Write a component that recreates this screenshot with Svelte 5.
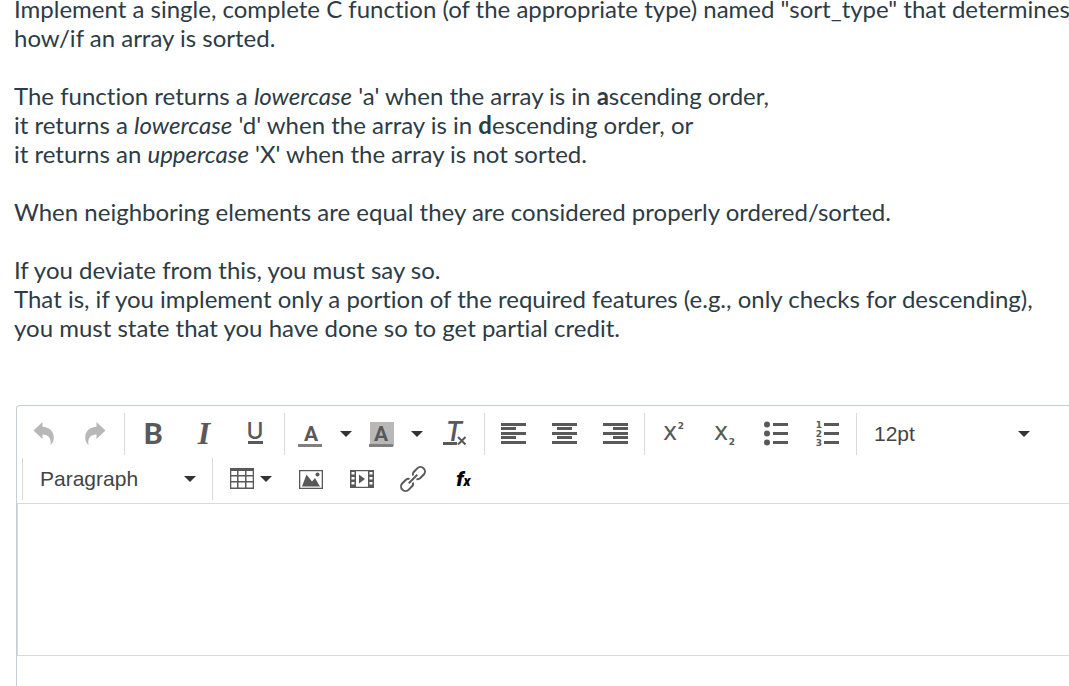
<script lang="ts">
  const fontSizes = ['8pt', '10pt', '12pt', '14pt', '18pt', '24pt', '36pt'];
  const blocks = ['Paragraph', 'Heading 2', 'Heading 3', 'Heading 4', 'Preformatted'];

  let fontSize = $state('12pt');
  let block = $state('Paragraph');
  let answer = $state('');
</script>

{#snippet caret()}
  <svg class="caret" width="12" height="6" viewBox="0 0 12 6"><path d="M0 0h12L6 6z" /></svg>
{/snippet}

{#snippet align(x: number)}
  <svg width="25" height="24" viewBox="0 0 25 24">
    <path d="M0 1h25v3H0zM0 10h25v3H0zM0 19h25v3H0z" />
    <path d="M{x} 5h15v3h-15zM{x} 14h15v3h-15z" />
  </svg>
{/snippet}

<main>
  <section class="question">
    <p>
      Implement a single, complete C function (of the appropriate type) named "sort_type" that determines<br />
      how/if an array is sorted.
    </p>
    <p>
      The function returns a <em>lowercase</em> 'a' when the array is in <strong>a</strong>scending order,<br />
      it returns a <em>lowercase</em> 'd' when the array is in <strong>d</strong>escending order, or<br />
      it returns an <em>uppercase</em> 'X' when the array is not sorted.
    </p>
    <p>When neighboring elements are equal they are considered properly ordered/sorted.</p>
    <p>
      If you deviate from this, you must say so.<br />
      That is, if you implement only a portion of the required features (e.g., only checks for descending),<br />
      you must state that you have done so to get partial credit.
    </p>
  </section>

  <section class="editor">
    <div class="toolbar" role="toolbar" aria-label="Editor">
      <div class="row">
        <div class="group">
          <button class="disabled" aria-label="Undo">
            <svg width="25" height="24" viewBox="0 0 25 24">
              <path d="M1.5 8.5 10.5 0v4.7C17 5 21.8 9 21.8 15.5c0 3-1 5.5-3.3 7.5C19.5 16 16.5 12.7 10.5 12.5V17z" />
            </svg>
          </button>
          <button class="disabled" aria-label="Redo">
            <svg width="25" height="24" viewBox="0 0 25 24">
              <path d="M22.5 8.5 13.5 0v4.7C7 5 2.2 9 2.2 15.5c0 3 1 5.5 3.3 7.5C4.5 16 7.5 12.7 13.5 12.5V17z" />
            </svg>
          </button>
        </div>
        <div class="group">
          <button aria-label="Bold">
            <svg width="25" height="24" viewBox="0 0 25 24">
              <text class="bold" x="12" y="22">B</text>
            </svg>
          </button>
          <button aria-label="Italic">
            <svg width="25" height="24" viewBox="0 0 25 24">
              <text class="italic" x="12" y="22">I</text>
            </svg>
          </button>
          <button aria-label="Underline">
            <svg width="25" height="24" viewBox="0 0 25 24">
              <text class="under" x="12" y="17">U</text>
              <path d="M5 19h15v3H5z" />
            </svg>
          </button>
        </div>
        <div class="group">
          <button class="main" aria-label="Text color">
            <svg width="24" height="25" viewBox="0 0 24 25">
              <text class="color" x="13" y="19">A</text>
              <path class="bar" d="M0 22h24v3H0z" />
            </svg>
          </button>
          <button class="open" aria-label="Choose text color">{@render caret()}</button>
          <button class="main" aria-label="Background color">
            <svg width="25" height="25" viewBox="0 0 25 25">
              <path class="fill" d="M1 0h24v24H1z" />
              <text class="color" x="12" y="19">A</text>
              <path class="bar" d="M0 22h24v3H0z" />
            </svg>
          </button>
          <button class="open" aria-label="Choose background color">{@render caret()}</button>
          <button aria-label="Clear formatting">
            <svg width="25" height="24" viewBox="0 0 25 24">
              <text class="clear" x="11" y="19">T</text>
              <path d="M0 20h14v3H0z" />
              <path class="line" d="m15 15 7.5 7.5m0-7.5L15 22.5" />
            </svg>
          </button>
        </div>
        <div class="group">
          <button aria-label="Align left">{@render align(0)}</button>
          <button aria-label="Align center">{@render align(5)}</button>
          <button aria-label="Align right">{@render align(10)}</button>
        </div>
        <div class="group wide">
          <button aria-label="Superscript">
            <svg width="25" height="24" viewBox="0 0 25 24">
              <text class="base" x="9" y="18">x</text>
              <text class="digit" x="20" y="7">2</text>
            </svg>
          </button>
          <button aria-label="Subscript">
            <svg width="25" height="24" viewBox="0 0 25 24">
              <text class="base" x="9" y="18">x</text>
              <text class="digit" x="20" y="23">2</text>
            </svg>
          </button>
          <button aria-label="Bullet list">
            <svg width="25" height="24" viewBox="0 0 25 24">
              <circle cx="4" cy="2.5" r="3" />
              <circle cx="4" cy="11.5" r="3" />
              <circle cx="4" cy="20.5" r="3" />
              <path d="M10 1h15v3H10zM10 10h15v3H10zM10 19h15v3H10z" />
            </svg>
          </button>
          <button aria-label="Numbered list">
            <svg width="25" height="24" viewBox="0 0 25 24">
              <text class="digit" x="5" y="6">1</text>
              <text class="digit" x="5" y="15">2</text>
              <text class="digit" x="5" y="24">3</text>
              <path d="M10 1h15v3H10zM10 10h15v3H10zM10 19h15v3H10z" />
            </svg>
          </button>
        </div>
        <div class="group">
          <label class="select">
            <select bind:value={fontSize} aria-label="Font size">
              {#each fontSizes as size}
                <option>{size}</option>
              {/each}
            </select>
            {@render caret()}
          </label>
        </div>
      </div>

      <div class="row">
        <div class="group start">
          <label class="select">
            <select bind:value={block} aria-label="Block format">
              {#each blocks as name}
                <option>{name}</option>
              {/each}
            </select>
            {@render caret()}
          </label>
        </div>
        <div class="group">
          <button class="table" aria-label="Table">
            <svg width="24" height="24" viewBox="0 0 24 24">
              <path d="M0 1h24v21H0zM1.3 4v4H7V4zm7.2 0v4H15V4zm8 0v4h6.2V4zM1.3 9.5v4.5H7V9.5zm7.2 0v4.5H15V9.5zm8 0v4.5h6.2V9.5zM1.3 15.5v5H7v-5zm7.2 0v5H15v-5zm8 0v5h6.2v-5z" fill-rule="evenodd" />
            </svg>
            {@render caret()}
          </button>
          <button aria-label="Embed image">
            <svg width="25" height="24" viewBox="0 0 25 24">
              <path d="M0 3h24v19H0zM1.3 4.3v16.4h21.4V4.3z" fill-rule="evenodd" />
              <path d="M3 19.5 7.5 7.5l5.5 7 3-3.5 5 8.5z" />
              <circle cx="18.5" cy="7.5" r="2" />
            </svg>
          </button>
          <button aria-label="Record media">
            <svg width="25" height="24" viewBox="0 0 25 24">
              <path d="M0 3h24v18H0zM6 4.3v15.4h12V4.3zM1.5 5v2.5h3V5zm0 5v2.5h3V10zm0 5v2.5h3V15zm18-10v2.5h3V5zm0 5v2.5h3V10zm0 5v2.5h3V15z" fill-rule="evenodd" />
              <path d="M9 7.5v9l6-4.5z" />
            </svg>
          </button>
          <button aria-label="Link">
            <svg width="25" height="24" viewBox="0 0 25 24">
              <g class="line" transform="rotate(-45 12 12)">
                <path d="M9.500 14.500a4 4 0 0 1-3 2H1.500a4.500 4.500 0 0 1 0-9h5a4 4 0 0 1 3 2" />
                <path d="M14.500 9.500a4 4 0 0 1 3-2h5a4.500 4.500 0 0 1 0 9h-5a4 4 0 0 1-3-2" />
                <path d="M6 12h12" />
              </g>
            </svg>
          </button>
          <button aria-label="Insert equation">
            <svg width="25" height="24" viewBox="0 0 25 24">
              <text class="math" x="8" y="19">f</text>
              <text class="math small" x="15" y="19">x</text>
            </svg>
          </button>
        </div>
      </div>
    </div>
    <textarea bind:value={answer} aria-label="Your answer"></textarea>
  </section>
</main>

<style>
  :global(body) {
    background: #fff;
    overflow: hidden;
  }

  main {
    display: flex;
    flex-direction: column;
    height: 100vh;
    overflow: hidden;
    color: #2d3b45;
    font-family: Lato, sans-serif;
  }

  .question {
    margin: -6px 0 63px 14px;
    font-size: 24px;
    font-variant-ligatures: none;
    line-height: 29px;
    white-space: nowrap;
  }

  p {
    margin: 0 0 29px;
  }

  p:last-child {
    margin-bottom: 0;
  }

  .editor {
    flex: 1;
    margin-left: 16px;
    border: solid #c7cdd1;
    border-width: 1px 0 0 1px;
    border-top-left-radius: 4px;
  }

  .toolbar {
    display: flex;
    flex-direction: column;
    gap: 3px;
    padding: 7px 0 3px;
  }

  .row {
    display: flex;
    height: 42px;
  }

  .group {
    display: flex;
    padding: 0 3px;
    border-right: 1px solid #d9d9d9;
  }

  .group:first-child {
    padding-left: 2px;
  }

  .group:last-child {
    border-right: 0;
  }

  .group.wide {
    padding-right: 4px;
  }

  .group.start {
    margin-left: 5px;
    padding-left: 3px;
    border-left: 1px solid #d9d9d9;
  }

  button {
    display: flex;
    align-items: center;
    justify-content: center;
    width: 51px;
    padding: 0;
    border: 0;
    background: none;
    color: #595959;
  }

  button.main {
    width: 44px;
  }

  button.open {
    width: 27px;
  }

  button.table {
    width: 70px;
    gap: 6px;
  }

  button.disabled {
    color: #b8b8b8;
  }

  svg {
    flex: none;
    fill: currentColor;
    overflow: visible;
  }

  .caret {
    fill: #333;
  }

  .bar {
    fill: #808080;
  }

  .fill {
    fill: #b8b8b8;
  }

  .line {
    fill: none;
    stroke: currentColor;
    stroke-width: 2;
  }

  text {
    text-anchor: middle;
    font-family: Lato, sans-serif;
  }

  .bold {
    font-size: 29px;
    font-weight: 900;
  }

  .italic {
    font: italic bold 32px 'Liberation Serif', serif;
  }

  .under {
    font: 500 23px Inter, sans-serif;
  }

  .color {
    font: bold 21px Roboto, sans-serif;
  }

  .clear {
    font: italic 500 27px Roboto, sans-serif;
  }

  .base {
    font: 24px 'DejaVu Sans', sans-serif;
  }

  .digit {
    font: bold 9px 'DejaVu Sans', sans-serif;
  }

  .math {
    fill: #000;
    font: italic 900 21px Roboto, sans-serif;
  }

  .math.small {
    font-size: 14px;
  }

  .select {
    position: relative;
    display: flex;
    width: 183px;
  }

  .select .caret {
    position: absolute;
    top: 18px;
    right: 13px;
    pointer-events: none;
  }

  select {
    width: 100%;
    padding: 0 14px 2px;
    border: 0;
    appearance: none;
    background: none;
    color: #444;
    font: 21px 'Liberation Sans', Arial, sans-serif;
  }

  textarea {
    display: block;
    box-sizing: border-box;
    width: 100%;
    height: 153px;
    padding: 12px;
    border: 1px solid #d9d9d9;
    border-right: 0;
    resize: none;
    font: 16px Lato, sans-serif;
  }
</style>
